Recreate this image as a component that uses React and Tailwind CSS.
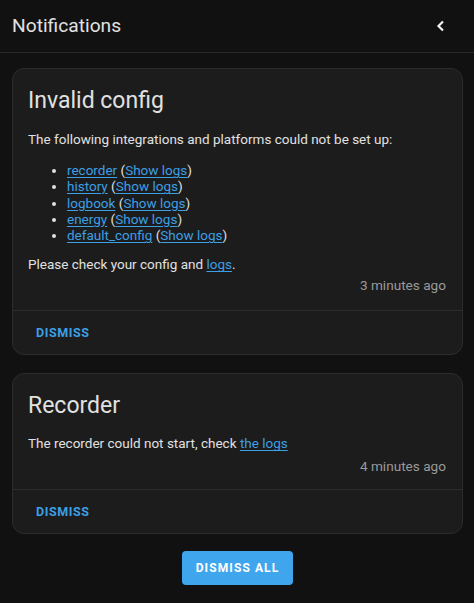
import React from "react";

const linkCls = "text-[#3d9fe4] underline underline-offset-2";

const integrations = ["recorder", "history", "logbook", "energy", "default_config"];

const DismissButton = () => (
  <div className="border-t border-[#2c2c2c] pl-[15px] pr-2 h-[44px] flex items-center">
    <button className="px-2 h-9 text-[12.5px] font-bold tracking-[0.6px] text-[#3d9fe4] uppercase">
      Dismiss
    </button>
  </div>
);

const App = () => {
  return (
    <div
      className="min-h-[603px] bg-[#111111] text-[#e1e1e1]"
      style={{ fontFamily: "Roboto, 'Liberation Sans', sans-serif" }}
    >
      {/* header */}
      <div className="h-[53px] border-b border-[#2a2a2a] flex items-center justify-between pl-3 pr-[27px]">
        <h1 className="text-[19.2px] font-normal">Notifications</h1>
        <svg width="12" height="14" viewBox="0 0 12 14" fill="none">
          <path d="M8 2.5 L3.5 7 L8 11.5" stroke="#f0f0f0" strokeWidth="2.2" />
        </svg>
      </div>

      <div className="pt-[15px] pl-3 pr-[11px] flex flex-col">
        {/* card 1 */}
        <div className="rounded-xl border border-[#2c2c2c] bg-[#1c1c1c]">
          <div className="pl-[15px] pr-4 pt-4 pb-[15px] text-[13.5px]">
            <h2 className="text-[23px] leading-8">Invalid config</h2>
            <p className="mt-3 leading-5">
              The following integrations and platforms could not be set up:
            </p>
            <ul className="mt-[13px] pl-[39px] list-disc leading-[16.3px]">
              {integrations.map((name) => (
                <li key={name}>
                  <a className={linkCls}>{name}</a> (<a className={linkCls}>Show logs</a>)
                </li>
              ))}
            </ul>
            <p className="mt-[11px] leading-5">
              Please check your config and <a className={linkCls}>logs</a>.
            </p>
            <div className="mt-[1px] text-right text-[13.6px] leading-5 text-[#9a9a9a]">
              3 minutes ago
            </div>
          </div>
          <DismissButton />
        </div>

        {/* card 2 */}
        <div className="mt-[18px] rounded-xl border border-[#2c2c2c] bg-[#1c1c1c]">
          <div className="pl-[15px] pr-4 pt-4 pb-[13px] text-[13.5px]">
            <h2 className="text-[23px] leading-8">Recorder</h2>
            <p className="mt-[11px] leading-5">
              The recorder could not start, check <a className={linkCls}>the logs</a>
            </p>
            <div className="mt-[3px] text-right text-[13.6px] leading-5 text-[#9a9a9a]">
              4 minutes ago
            </div>
          </div>
          <DismissButton />
        </div>

        <div className="flex justify-center mt-[17px] pb-4">
          <button className="w-[111px] h-[34px] rounded bg-[#3fa6ee] text-white text-[12px] font-bold tracking-[1.1px] uppercase">
            Dismiss all
          </button>
        </div>
      </div>
    </div>
  );
};

export default App;
